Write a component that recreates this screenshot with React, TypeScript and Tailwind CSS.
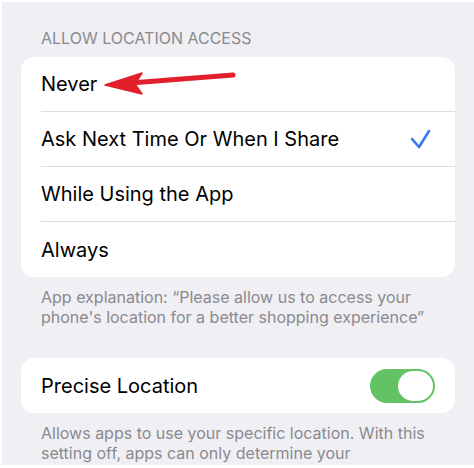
const options = [
  { label: "Never", selected: false },
  { label: "Ask Next Time Or When I Share", selected: true },
  { label: "While Using the App", selected: false },
  { label: "Always", selected: false },
];

function Check() {
  return (
    <svg width="20" height="20" viewBox="0 0 20 20" fill="none">
      <path
        d="M1 10 L8 18 L18 2"
        stroke="#3579f0"
        strokeWidth="2.6"
        strokeLinecap="round"
        strokeLinejoin="round"
      />
    </svg>
  );
}

function PointerArrow() {
  return (
    <svg
      className="absolute left-[80px] top-[10px] pointer-events-none"
      width="160"
      height="40"
      viewBox="0 0 160 40"
    >
      <path d="M36 15.5 L132 8" stroke="#e2202b" strokeWidth="5" strokeLinecap="round" />
      <path d="M4 18 L41 6 L34 17 L41 27 Z" fill="#e2202b" stroke="#e2202b" strokeWidth="1.5" strokeLinejoin="round" />
    </svg>
  );
}

function Toggle() {
  return (
    <div className="w-[65px] h-[34px] rounded-full bg-[#63c263] p-[2px] flex justify-end">
      <div className="w-[35px] h-[30px] rounded-full bg-white" />
    </div>
  );
}

export default function App() {
  return (
    <div
      className="w-[474px] h-[468px] overflow-hidden bg-[#efeff4] border-l-2 border-t-2 border-b-[3px] border-white px-[19px]"
      style={{ fontFamily: "Inter, 'Noto Sans', sans-serif" }}
    >
      <div className="pt-[27px] mb-[10px] pl-5 text-[16px] leading-[18px] text-[#8a8a8e] uppercase">
        Allow Location Access
      </div>

      <div className="relative bg-white rounded-[13px]">
        {options.map((opt, i) => (
          <div key={opt.label} className="pl-5">
            <div
              className={
                "h-[55px] flex items-center justify-between pr-[24px] text-[20px] text-black " +
                (i < options.length - 1 ? "border-b border-[#dcdce0]" : "")
              }
            >
              <span>{opt.label}</span>
              {opt.selected && <Check />}
            </div>
          </div>
        ))}
        <PointerArrow />
      </div>

      <div className="pt-[10px] mb-[31px] px-5 text-[16px] leading-[20px] text-[#8a8a8e]">
        <p>App explanation: “Please allow us to access your</p>
        <p>phone's location for a better shopping experience”</p>
      </div>

      <div className="bg-white rounded-[13px] h-[55px] pl-5 pr-5 flex items-center justify-between">
        <span className="text-[20px] text-black">Precise Location</span>
        <Toggle />
      </div>

      <div className="pt-[10px] px-5 text-[16px] leading-[20px] text-[#8a8a8e]">
        <p>Allows apps to use your specific location. With this</p>
        <p>setting off, apps can only determine your</p>
      </div>
    </div>
  );
}
